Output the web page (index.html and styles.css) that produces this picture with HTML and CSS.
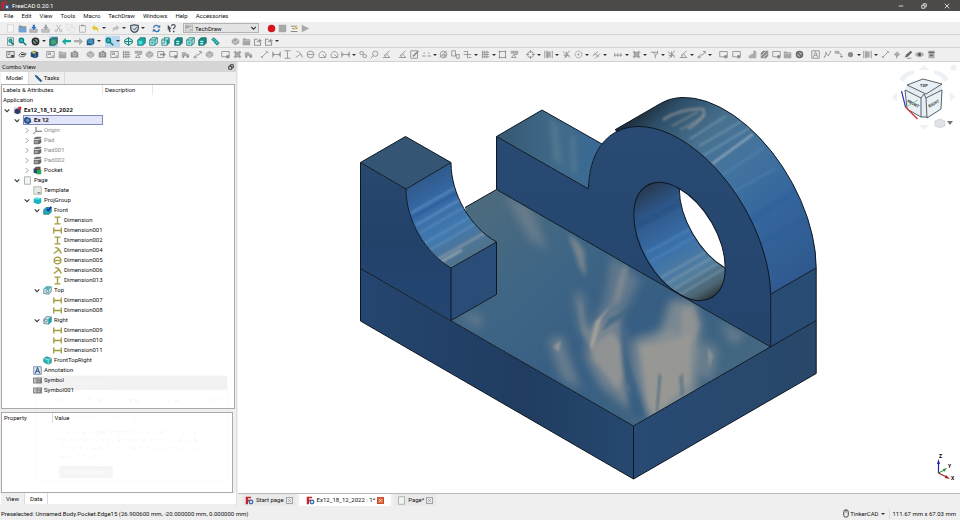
FILE: index.html
```html
<!DOCTYPE html>
<html lang="en">
<head>
  <meta charset="UTF-8">
  <meta name="viewport" content="width=device-width, initial-scale=1.0">
  <title>FreeCAD 0.20.1</title>
  <link rel="stylesheet" href="styles.css">
</head>
<body>
  <!-- icon sprite -->
  <svg class="sprite" aria-hidden="true">
    <symbol id="logo" viewBox="0 0 12 12"><path d="M1 1h7v2H4v2h3v2H4v4H1z" fill="#c5252b"/><circle cx="8" cy="8" r="2.4" fill="#cfe0f5" stroke="#3467a8" stroke-width="1.6"/></symbol>
    <symbol id="new" viewBox="0 0 12 12"><path d="M2 1h8v10H2z" fill="#f6f6f6" stroke="#d0d0d0"/></symbol>
    <symbol id="sheet" viewBox="0 0 12 12"><path d="M2 1h8v10H2z" fill="#f1f4f1" stroke="#9aa09a"/></symbol>
    <symbol id="open" viewBox="0 0 12 12"><path d="M1 2h4l1 1h5v8H1z" fill="#8b9299"/><path d="M1 5h10v6H1z" fill="#6fa3d8"/></symbol>
    <symbol id="save" viewBox="0 0 12 12"><path d="M1 7h10v4H1z" fill="#b9bdc0" stroke="#999"/><path d="M5 1h3v3h2L6.500 8 3 4h2z" fill="#3476bd"/></symbol>
    <symbol id="print" viewBox="0 0 12 12"><path d="M1 7h10v4H1z" fill="#c5c5c5" stroke="#aaa"/><path d="M5 1h3v3h2L6.500 8 3 4h2z" fill="#a2a2a2"/></symbol>
    <symbol id="cut" viewBox="0 0 12 12"><path d="M3 1l5 7M9 1L4 8" stroke="#aaa" fill="none"/><circle cx="3" cy="9" r="1.500" stroke="#aaa" fill="none"/><circle cx="9" cy="9" r="1.500" stroke="#aaa" fill="none"/></symbol>
    <symbol id="copy" viewBox="0 0 12 12"><path d="M1 1h7v7H1zM4 4h7v7H4z" fill="#f4f4f4" stroke="#dcdcdc"/></symbol>
    <symbol id="paste" viewBox="0 0 12 12"><path d="M2 2h8v9H2z" fill="#eee" stroke="#aaa"/><path d="M4 1h4v2H4z" fill="#999"/></symbol>
    <symbol id="undo" viewBox="0 0 12 12"><path d="M1 5l4-4v2.500c5 0 6 4 3 7.500 1-3 0-4-3-4V9z" fill="#e9c52c"/></symbol>
    <symbol id="redo" viewBox="0 0 12 12"><path d="M11 5L7 1v2.500c-5 0-6 4-3 7.500-1-3 0-4 3-4V9z" fill="#bdbdbd"/></symbol>
    <symbol id="bounds" viewBox="0 0 12 12"><path d="M1 2l5-1 5 1v4c0 3-3 5-5 5S1 9 1 6z" fill="#d5dde2" stroke="#35424a" stroke-width="1.500"/><path d="M4 6l2 2 3-4" stroke="#35424a" fill="none"/></symbol>
    <symbol id="refresh" viewBox="0 0 12 12"><path d="M2 5c1-4 6-4 7-1M10 7c-1 4-6 4-7 1" stroke="#3c76b5" stroke-width="1.800" fill="none"/><path d="M11 1v4H7zM1 11V7h4z" fill="#3c76b5"/></symbol>
    <symbol id="help" viewBox="0 0 12 12"><path d="M1 1l5 5-2 .5L5 10l-2 1-1-4-1 1z" fill="#46535c"/><path d="M6 3c0-3 5-3 5 0 0 2-2.500 2-2.500 4" stroke="#46535c" stroke-width="1.500" fill="none"/><path d="M8 9h2v2H8z" fill="#46535c"/></symbol>
    <symbol id="wb" viewBox="0 0 12 12"><path d="M0 1h12v10H0z" fill="#a4a8a8"/><path d="M1 2h10v8H1z" fill="#e0e2e0"/><path d="M2 3h3v3H2zM6 4h4M7 8h3" stroke="#777" fill="none"/></symbol>
    <symbol id="rec" viewBox="0 0 12 12"><circle cx="6" cy="6" r="5" fill="#d6141b"/></symbol>
    <symbol id="stop" viewBox="0 0 12 12"><path d="M1 1h10v10H1z" fill="#a8a8a8"/></symbol>
    <symbol id="edit" viewBox="0 0 12 12"><path d="M1 3h8M3 6h7M1 10h9" stroke="#8b8b80" stroke-width="1.500"/><path d="M4 7l5-5 2 1-5 5z" fill="#e4ca6a"/></symbol>
    <symbol id="play" viewBox="0 0 12 12"><path d="M1 1l10 5-10 5z" fill="#a8a8a8"/></symbol>
    <symbol id="fit" viewBox="0 0 12 12"><path d="M2 1h8v10H2z" fill="#d7eeee" stroke="#5e8888"/><circle cx="6" cy="5" r="2.200" fill="#2bb" stroke="#166"/><path d="M7 7l3 3" stroke="#166" stroke-width="2"/></symbol>
    <symbol id="lens" viewBox="0 0 12 12"><circle cx="4.500" cy="4.500" r="3" fill="#22bcc0" stroke="#14777a" stroke-width="1.500"/><path d="M7 7l4 4" stroke="#14777a" stroke-width="2"/></symbol>
    <symbol id="style" viewBox="0 0 12 12"><circle cx="6" cy="6" r="4.200" fill="#4fa7a3" stroke="#3a2526" stroke-width="2"/><path d="M3 3l6 6" stroke="#3a2526" stroke-width="1.500"/></symbol>
    <symbol id="bbox" viewBox="0 0 12 12"><path d="M1 3l3-2h7v7l-3 3H1z" fill="#318787" stroke="#174e4e"/><circle cx="6" cy="7" r="3" fill="#46a865"/></symbol>
    <symbol id="left" viewBox="0 0 12 12"><path d="M0 6l5-5v3h7v3H5v4z" fill="#18a9a3"/></symbol>
    <symbol id="right" viewBox="0 0 12 12"><path d="M12 6L7 1v3H0v3h7v4z" fill="#a9adad"/></symbol>
    <symbol id="link" viewBox="0 0 12 12"><path d="M1 4l3-2h7v7l-3 2H1z" fill="#285f91"/><path d="M1 4h7v7" fill="none" stroke="#8fc1db"/><path d="M3 7h4" stroke="#4bd" stroke-width="2"/></symbol>
    <symbol id="iso" viewBox="0 0 12 12"><path d="M6 1l5 3v4l-5 3-5-3V4zM1 6h10M6 1v10" fill="#cbeeed" stroke="#178080" stroke-width="1.300"/></symbol>
    <symbol id="cube-a" viewBox="0 0 12 12"><path d="M1 4l3-3h7v7l-3 3H1z" fill="#18a5a5" stroke="#176a6a"/><path d="M2 5h5v5H2z" fill="#46e0dd"/></symbol>
    <symbol id="cube-b" viewBox="0 0 12 12"><path d="M1 4l3-3h7v7l-3 3H1zM1 4h7v7M8 4l3-3" fill="#c3eeeb" stroke="#187d7b" stroke-width="1.200"/><path d="M3 6h3v3H3z" fill="#20b5b0"/></symbol>
    <symbol id="cube-c" viewBox="0 0 12 12"><path d="M1 4l3-3h7v7l-3 3H1z" fill="#d4efed" stroke="#187d7b"/><path d="M8 4l3-3v7l-3 3z" fill="#15a19d"/><path d="M1 4h7v7M5 1v7H1" fill="none" stroke="#187d7b"/></symbol>
    <symbol id="cube-d" viewBox="0 0 12 12"><path d="M1 4l3-3h7v7l-3 3H1z" fill="#148b88" stroke="#12605e"/><path d="M3 5h4v2H3zM3 8h4v2H3z" fill="#b5f3ef"/></symbol>
    <symbol id="measure" viewBox="0 0 12 12"><path d="M1 3l3-2 7 7-3 3z" fill="#18aaa7" stroke="#157773"/><path d="M4 3l-1 1M6 5L5 6M8 7L7 8" stroke="#fff"/></symbol>
    <symbol id="part" viewBox="0 0 12 12"><path d="M6 1l5 3v4l-5 3-5-3V4z" fill="#a9a9a9"/><path d="M3 6l3 2 4-4" stroke="#e8e8e8" fill="none"/></symbol>
    <symbol id="folder" viewBox="0 0 12 12"><path d="M1 2h4l1 1h5v8H1z" fill="#a5a5a5"/><path d="M2 5h8" stroke="#d0d0d0"/></symbol>
    <symbol id="share" viewBox="0 0 12 12"><path d="M6 3H2v8h8V7" fill="none" stroke="#999" stroke-width="1.500"/><path d="M5 8c0-3 1-4 3-4V2l4 3-4 3V6c-2 0-2 1-3 2z" fill="#999"/></symbol>
    <symbol id="page" viewBox="0 0 12 12"><path d="M1 2h10v8H1z" fill="#e8e8e3" stroke="#555"/><path d="M3 4h3M3 6h2M7 7h3v2H7z" stroke="#555"/></symbol>
    <symbol id="redraw" viewBox="0 0 12 12"><path d="M1 7l4-4 6 2-3 4H3z" fill="#ddd" stroke="#555"/><path d="M4 6h5" stroke="#333" stroke-width="1.500"/></symbol>
    <symbol id="view" viewBox="0 0 12 12"><path d="M1 3l4-2 6 2v6l-4 2-6-2z" fill="#24496f"/><path d="M2 4l5 1v5" fill="none" stroke="#5c9de0"/><path d="M4 1l4 2-2 2-4-2z" fill="#e1bf41"/></symbol>
    <!-- greyed out TechDraw tools -->
    <symbol id="g-page" viewBox="0 0 12 12"><path d="M1 2h10v8H1z" class="g"/><path d="M3 4h3v2H3zM7 8h3" class="g"/></symbol>
    <symbol id="g-cube" viewBox="0 0 12 12"><path d="M6 1l5 3v4l-5 3-5-3V4z" class="gf"/><path d="M3 5l3 2 3-2M6 7v3" class="gl"/></symbol>
    <symbol id="g-cam" viewBox="0 0 12 12"><path d="M1 3h3l1-2h3l1 2h2v7H1z" class="gd"/><circle cx="6" cy="6" r="2" class="gl"/></symbol>
    <symbol id="g-hatch" viewBox="0 0 12 12"><path d="M2 1v10M5 1v10M8 1v10M1 3h10M1 6h10M1 9h10" class="g"/></symbol>
    <symbol id="g-clip" viewBox="0 0 12 12"><path d="M3 3h6v6H3z" class="gf"/><path d="M1 3h10M3 1v10M1 9h10M9 1v10" class="g"/></symbol>
    <symbol id="g-arrow" viewBox="0 0 12 12"><path d="M1 2h8v8H1z" class="g"/><path d="M4 5h4V3l4 3-4 3V7H4z" class="gd"/></symbol>
    <symbol id="g-truck" viewBox="0 0 12 12"><path d="M1 3h6v5H1zM7 5h3l1 2v2H7z" class="gf"/><circle cx="3" cy="9" r="1.500" class="gd"/><circle cx="9" cy="9" r="1.500" class="gd"/></symbol>
    <symbol id="g-export" viewBox="0 0 12 12"><path d="M1 10l4-4 2 1 4-5M8 2h3v3" class="g"/><path d="M1 8h4v3H1z" class="gf"/></symbol>
    <symbol id="g-len" viewBox="0 0 12 12"><path d="M2 10l8-8M1 8l3 3M8 1l3 3" class="g"/></symbol>
    <symbol id="g-hor" viewBox="0 0 12 12"><path d="M1 2v8M11 2v8M1 6h10M3 4L1 6l2 2M9 4l2 2-2 2" class="g"/></symbol>
    <symbol id="g-ver" viewBox="0 0 12 12"><path d="M2 1h8M2 11h8M6 1v10" class="g"/></symbol>
    <symbol id="g-ang" viewBox="0 0 12 12"><path d="M2 2c4 0 6 3 8 8M1 10l7-5" class="g"/></symbol>
    <symbol id="g-dia" viewBox="0 0 12 12"><circle cx="6" cy="6" r="4.500" class="g"/><path d="M2 6h8" class="g"/></symbol>
    <symbol id="g-rad" viewBox="0 0 12 12"><path d="M2 10c-2-4 1-8 4-8s6 4 4 8zM6 6l4 4" class="g"/></symbol>
    <symbol id="g-chain" viewBox="0 0 12 12"><rect x="1" y="2" width="5" height="4" rx="2" class="g"/><rect x="5" y="6" width="5" height="4" rx="2" class="g"/></symbol>
    <symbol id="g-bal" viewBox="0 0 12 12"><circle cx="7" cy="5" r="3.500" class="g"/><path d="M1 11l4-4" class="g"/></symbol>
    <symbol id="g-axo" viewBox="0 0 12 12"><path d="M1 10h10M3 8l7-7M6 5l4 5M4 6v4" class="g"/></symbol>
    <symbol id="g-note" viewBox="0 0 12 12"><path d="M1 1h9v10H1z" class="g"/><path d="M3 8l7-7 2 1-7 7z" class="gd"/></symbol>
    <symbol id="g-dots" viewBox="0 0 12 12"><path d="M0 8h5M7 8h5M2 4h2M8 4h2" class="g"/></symbol>
    <symbol id="g-face" viewBox="0 0 12 12"><circle cx="6" cy="6" r="4.500" class="g"/><path d="M1 10L10 1M4 6l4 4" class="g"/><path d="M6 5h4v4H6z" class="gf"/></symbol>
    <symbol id="g-sq" viewBox="0 0 12 12"><path d="M1 1h5v7H1zM7 6h4v5H7z" class="g"/></symbol>
    <symbol id="g-mid" viewBox="0 0 12 12"><path d="M6 1v10M1 6h10M1 2h4M7 10h4" class="g"/></symbol>
    <symbol id="g-box" viewBox="0 0 12 12"><path d="M2 2h8v8H2z" class="g"/><path d="M1 1h2v2H1zM9 1h2v2H9zM1 9h2v2H1zM9 9h2v2H9z" class="gd"/></symbol>
    <symbol id="g-weld" viewBox="0 0 12 12"><path d="M1 1h10v4H1z" class="gf"/><path d="M2 10l3-4 3 4zM6 6h4" class="g"/></symbol>
    <symbol id="g-target" viewBox="0 0 12 12"><circle cx="6" cy="6" r="4" class="g"/><path d="M6 0v4M6 8v4M0 6h4M8 6h4" class="g"/></symbol>
    <symbol id="g-bars" viewBox="0 0 12 12"><path d="M3 2h6v8H3z" class="gf"/><path d="M1 1v10M11 1v10M4 1v10" class="g"/></symbol>
    <symbol id="g-star" viewBox="0 0 12 12"><path d="M1 2l10 8M10 1L3 11M6 2v8M2 7h8" class="g"/></symbol>
    <symbol id="g-circ" viewBox="0 0 12 12"><circle cx="6" cy="6" r="4.500" class="g" stroke-dasharray="3 1"/><circle cx="6" cy="6" r="1.200" class="gd"/></symbol>
    <symbol id="g-par" viewBox="0 0 12 12"><path d="M1 8l7-6M4 11l7-6M3 4l6 5" class="g"/></symbol>
    <symbol id="g-hash" viewBox="0 0 12 12"><path d="M1 4v5M5 4v5M9 4v5M0 7h11" class="g"/></symbol>
    <symbol id="g-lead" viewBox="0 0 12 12"><path d="M1 3h9M4 3l3 3v5M10 1v4L7 7" class="g"/></symbol>
    <symbol id="g-img" viewBox="0 0 12 12"><path d="M1 2h10v7H1z" class="g"/><path d="M3 4h5M7 7h4v4H7z" class="gd"/></symbol>
    <symbol id="g-steps" viewBox="0 0 12 12"><path d="M1 7h3V5h3V1h4v10H1z" class="gf"/></symbol>
    <symbol id="g-geo" viewBox="0 0 12 12"><path d="M1 4l3-3h7v7l-3 3H1z" class="gd"/><path d="M1 8l7-6M4 10l6-5" class="gl"/></symbol>
    <symbol id="g-no" viewBox="0 0 12 12"><circle cx="6" cy="6" r="4" fill="#bbb" stroke="#666" stroke-width="2"/><path d="M3 3l6 6" stroke="#666" stroke-width="2"/></symbol>
    <symbol id="g-a" viewBox="0 0 12 12"><path d="M1 1h10v10H1z" class="g"/><path d="M3 10l3-8 3 8M4 7h4" class="g"/></symbol>
    <symbol id="g-poly" viewBox="0 0 12 12"><path d="M2 10l2-6 3 4 3-6M1 9h2M3 3h2M9 2h2" class="g"/></symbol>
    <symbol id="g-flow" viewBox="0 0 12 12"><path d="M1 1h6v4H1z" class="gf"/><path d="M6 4c3 0 4 2 4 6M8 8l2 2 2-2" class="g"/></symbol>
    <symbol id="g-dot" viewBox="0 0 12 12"><circle cx="6" cy="6" r="3.500" class="gd"/></symbol>
    <symbol id="g-pen" viewBox="0 0 12 12"><path d="M1 10l2-4 6-5 2 2-6 6z" fill="#666"/><path d="M4 11h6" class="g"/></symbol>
    <symbol id="g-pin" viewBox="0 0 12 12"><path d="M2 6l5-4 4 4-4 3z" class="gf"/><path d="M6 7v4" class="g"/></symbol>
    <symbol id="g-eye" viewBox="0 0 12 12"><path d="M0 6c3-5 9-5 12 0-3 5-9 5-12 0z" class="gf"/><circle cx="6" cy="6" r="2" fill="#555"/></symbol>
    <symbol id="g-db" viewBox="0 0 12 12"><path d="M2 1h8v10H2z" class="gf"/><path d="M2 3h8M4 7h4" stroke="#555" stroke-width="1.500"/></symbol>
    <!-- tree icons -->
    <symbol id="t-doc" viewBox="0 0 12 12"><path d="M1 1h10v10H1z" fill="#dde2e8"/><path d="M2 5l4-2 4 2v4l-4 2-4-2z" fill="#303a66"/><path d="M7 1h4v4H7z" fill="#c32c3b"/></symbol>
    <symbol id="t-body" viewBox="0 0 12 12"><path d="M1 4l3-3 6 2 1 5-4 3-5-2z" fill="#254d7c"/><path d="M3 5l4-2 2 3-3 3z" fill="#5e8fc5"/></symbol>
    <symbol id="t-origin" viewBox="0 0 12 12"><path d="M4 1v6h8M4 7l-4 4" fill="none" stroke="#666" stroke-width="1.300"/></symbol>
    <symbol id="t-pad" viewBox="0 0 12 12"><path d="M1 3l3-2h7v2L8 4H1z" fill="#777"/><path d="M1 5h7l3-1v5l-3 2H1z" fill="#666"/><path d="M2 7h5M2 9h5" stroke="#ccc"/></symbol>
    <symbol id="t-pocket" viewBox="0 0 12 12"><path d="M1 4l3-3h6v9l-3 1-6-2z" fill="#2d5d43"/><path d="M5 5h6v6H5z" fill="#23a950"/><path d="M1 4h4v5H1z" fill="#2b447d"/><path d="M6 1l3 3H4z" fill="#df323b"/></symbol>
    <symbol id="t-tpl" viewBox="0 0 12 12"><path d="M1 1h10v10H1z" fill="#e8ece8" stroke="#a0a6a0"/><path d="M6 8h4v2H6z" fill="#88908a"/></symbol>
    <symbol id="t-grp" viewBox="0 0 12 12"><path d="M1 4l3-2 7 1v6l-4 2-6-2z" fill="#19b4bb"/><path d="M1 4l3-2 7 1-4 2z" fill="#66e0e2"/></symbol>
    <symbol id="t-front" viewBox="0 0 12 12"><path d="M1 5l3-3h7v6l-3 3H1z" fill="#20aabb" stroke="#176"/><path d="M5 4l2 2 4-5" stroke="#182fc0" stroke-width="2.500" fill="none"/></symbol>
    <symbol id="t-top" viewBox="0 0 12 12"><path d="M1 4l3-3h7v6l-3 4-7-1z" fill="#d2e9ea" stroke="#49777c"/><path d="M1 4l3-3h7L8 5z" fill="#44bcc1"/><circle cx="6" cy="7" r="2" fill="none" stroke="#49777c"/></symbol>
    <symbol id="t-right" viewBox="0 0 12 12"><path d="M1 4l3-3h7v6l-3 4-7-1z" fill="#d2e9ea" stroke="#49777c"/><path d="M7 4l4-3v7l-4 3z" fill="#1aa2a6"/><circle cx="4" cy="6" r="2" fill="none" stroke="#49777c"/></symbol>
    <symbol id="t-iso" viewBox="0 0 12 12"><path d="M1 3l4-2 6 2v6l-4 2-6-3z" fill="#1fb9bb" stroke="#3d7f80"/><path d="M1 3l6 2v6M7 5l4-2" fill="none" stroke="#bdeeee"/></symbol>
    <symbol id="t-ver" viewBox="0 0 12 12"><path d="M2 1.500h8M2 10.500h8M6 1v10" class="d"/></symbol>
    <symbol id="t-hor" viewBox="0 0 12 12"><path d="M1 2v8M11 2v8M1 6h10" class="d"/></symbol>
    <symbol id="t-ang" viewBox="0 0 12 12"><path d="M3 2c4 0 6 3 8 8M1 10l7-5" class="d"/></symbol>
    <symbol id="t-dia" viewBox="0 0 12 12"><circle cx="6" cy="6" r="4.500" class="d"/><path d="M2 6h8" class="d"/></symbol>
    <symbol id="t-ann" viewBox="0 0 12 12"><path d="M1 1h10v10H1z" fill="#e5edf5" stroke="#4f6f99"/><path d="M3 10l3-8 3 8M4 7h4" stroke="#27446e" stroke-width="1.300" fill="none"/></symbol>
    <symbol id="t-sym" viewBox="0 0 12 12"><path d="M0 2h12v8H0z" fill="#888"/><path d="M2 4h2v4H2zM6 4h4M6 7h3" stroke="#ddd" fill="none"/></symbol>
    <symbol id="t-task" viewBox="0 0 12 12"><path d="M1 1l3 1 7 7-2 2-7-7z" fill="#2c5b85"/></symbol>
    <symbol id="down" viewBox="0 0 12 12"><path d="M2 4l4 4 4-4" fill="none" stroke="#333" stroke-width="1.800"/></symbol>
    <symbol id="next" viewBox="0 0 12 12"><path d="M4 2l4 4-4 4" fill="none" stroke="#777" stroke-width="1.300"/></symbol>
    <symbol id="close" viewBox="0 0 12 12"><path d="M3 3l6 6M9 3L3 9" fill="none" stroke="currentColor" stroke-width="1.800"/></symbol>
  </svg>

  <header class="titlebar">
    <svg class="icon"><use href="#logo"/></svg>
    <h1>FreeCAD 0.20.1</h1>
    <div class="window-buttons">
      <button aria-label="Minimize"><svg viewBox="0 0 8 8"><path d="M1 4h6"/></svg></button>
      <button aria-label="Restore"><svg viewBox="0 0 8 8"><path d="M1 3h4v4H1zM3 3V1h4v4H5"/></svg></button>
      <button aria-label="Close window"><svg viewBox="0 0 8 8"><path d="M1 1l6 6M7 1L1 7"/></svg></button>
    </div>
  </header>

  <nav class="menubar">
    <a href="#">File</a><a href="#">Edit</a><a href="#">View</a><a href="#">Tools</a><a href="#">Macro</a><a href="#">TechDraw</a><a href="#">Windows</a><a href="#">Help</a><a href="#">Accessories</a>
  </nav>

  <div class="toolbar toolbar-file">
    <div class="group">
      <button aria-label="New"><svg><use href="#new"/></svg></button>
      <button aria-label="Open"><svg><use href="#open"/></svg></button>
      <button aria-label="Save"><svg><use href="#save"/></svg></button>
      <button aria-label="Print"><svg><use href="#print"/></svg></button>
    </div>
    <div class="group plain">
      <button aria-label="Cut"><svg><use href="#cut"/></svg></button>
      <button aria-label="Copy"><svg><use href="#copy"/></svg></button>
      <button aria-label="Paste"><svg><use href="#paste"/></svg></button>
    </div>
    <div class="group plain">
      <button class="drop" aria-label="Undo"><svg><use href="#undo"/></svg></button>
      <button class="drop" aria-label="Redo"><svg><use href="#redo"/></svg></button>
    </div>
    <div class="group plain">
      <button class="drop" aria-label="Link navigation"><svg><use href="#bounds"/></svg></button>
      <button aria-label="Refresh"><svg><use href="#refresh"/></svg></button>
      <button aria-label="What's this"><svg><use href="#help"/></svg></button>
    </div>
    <div class="group workbench">
      <svg class="icon"><use href="#wb"/></svg>
      <select aria-label="Workbench"><option>TechDraw</option></select>
      <svg class="icon chevron"><use href="#down"/></svg>
    </div>
    <div class="group">
      <button aria-label="Record macro"><svg><use href="#rec"/></svg></button>
      <button aria-label="Stop macro"><svg><use href="#stop"/></svg></button>
      <button aria-label="Edit macros"><svg><use href="#edit"/></svg></button>
      <button aria-label="Run macro"><svg><use href="#play"/></svg></button>
    </div>
  </div>

  <div class="toolbar toolbar-view">
    <div class="group">
      <button aria-label="Fit all"><svg><use href="#fit"/></svg></button>
      <button aria-label="Fit selection"><svg><use href="#lens"/></svg></button>
      <button class="drop" aria-label="Draw style"><svg><use href="#style"/></svg></button>
      <button class="on" aria-label="Bounding box"><svg><use href="#bbox"/></svg></button>
    </div>
    <div class="group plain">
      <button aria-label="Back"><svg><use href="#left"/></svg></button>
      <button aria-label="Forward"><svg><use href="#right"/></svg></button>
      <button class="drop" aria-label="Go to link"><svg><use href="#link"/></svg></button>
    </div>
    <div class="group plain">
      <button class="drop on" aria-label="Zoom"><svg><use href="#lens"/></svg></button>
      <button aria-label="Isometric"><svg><use href="#iso"/></svg></button>
    </div>
    <div class="group plain">
      <button aria-label="Front view"><svg><use href="#cube-a"/></svg></button>
      <button aria-label="Top view"><svg><use href="#cube-b"/></svg></button>
      <button aria-label="Right view"><svg><use href="#cube-c"/></svg></button>
    </div>
    <div class="group plain">
      <button aria-label="Rear view"><svg><use href="#cube-d"/></svg></button>
      <button aria-label="Bottom view"><svg><use href="#cube-b"/></svg></button>
      <button aria-label="Left view"><svg><use href="#cube-d"/></svg></button>
    </div>
    <div class="group plain">
      <button aria-label="Measure"><svg><use href="#measure"/></svg></button>
    </div>
    <div class="group">
      <button aria-label="Create part"><svg><use href="#part"/></svg></button>
      <button aria-label="Create group"><svg><use href="#folder"/></svg></button>
      <button aria-label="Make link"><svg><use href="#share"/></svg></button>
      <button class="drop" aria-label="Make sub-link"><svg><use href="#share"/></svg></button>
    </div>
  </div>

  <div class="toolbar toolbar-draw">
    <div class="group">
      <button aria-label="Insert page"><svg><use href="#page"/></svg></button>
      <button aria-label="Redraw page"><svg><use href="#redraw"/></svg></button>
      <button aria-label="Insert view"><svg><use href="#view"/></svg></button>
    </div>
    <div class="group">
      <button aria-label="Template page"><svg><use href="#g-page"/></svg></button>
      <button aria-label="Open page"><svg><use href="#folder"/></svg></button>
      <button aria-label="Print pages"><svg><use href="#g-cam"/></svg></button>
    </div>
    <div class="group">
      <button aria-label="Projection group"><svg><use href="#g-cube"/></svg></button>
      <button aria-label="Active view"><svg><use href="#g-cam"/></svg></button>
      <button aria-label="Section view"><svg><use href="#g-page"/></svg></button>
      <button aria-label="Detail view"><svg><use href="#g-hatch"/></svg></button>
      <button aria-label="Draft view"><svg><use href="#g-weld"/></svg></button>
      <button aria-label="Arch view"><svg><use href="#g-cube"/></svg></button>
      <button aria-label="Move view"><svg><use href="#g-arrow"/></svg></button>
      <button aria-label="Spreadsheet view"><svg><use href="#g-img"/></svg></button>
      <button aria-label="Share view"><svg><use href="#g-truck"/></svg></button>
      <button aria-label="Export"><svg><use href="#g-export"/></svg></button>
      <button aria-label="Project shape"><svg><use href="#g-cube"/></svg></button>
    </div>
    <div class="group">
      <button aria-label="Clip group"><svg><use href="#g-img"/></svg></button>
      <button aria-label="Add to clip"><svg><use href="#g-clip"/></svg></button>
      <button aria-label="Remove from clip"><svg><use href="#g-truck"/></svg></button>
    </div>
    <div class="group">
      <button aria-label="Length"><svg><use href="#g-len"/></svg></button>
      <button aria-label="Horizontal"><svg><use href="#g-hor"/></svg></button>
      <button aria-label="Vertical"><svg><use href="#g-ver"/></svg></button>
      <button aria-label="Angle"><svg><use href="#g-ang"/></svg></button>
      <button aria-label="Diameter"><svg><use href="#g-dia"/></svg></button>
      <button aria-label="Radius"><svg><use href="#g-rad"/></svg></button>
      <button aria-label="3 point angle"><svg><use href="#g-rad"/></svg></button>
      <button class="drop" aria-label="Extent"><svg><use href="#g-hor"/></svg></button>
      <button aria-label="Link dimension"><svg><use href="#g-chain"/></svg></button>
      <button aria-label="Balloon"><svg><use href="#g-bal"/></svg></button>
      <button aria-label="Axonometric"><svg><use href="#g-axo"/></svg></button>
    </div>
    <div class="group">
      <button aria-label="Landmark"><svg><use href="#g-axo"/></svg></button>
      <button aria-label="Rich text"><svg><use href="#g-note"/></svg></button>
      <button class="drop" aria-label="Cosmetic vertex"><svg><use href="#g-dots"/></svg></button>
      <button aria-label="Hatch face"><svg><use href="#g-face"/></svg></button>
      <button aria-label="Cosmetic eraser"><svg><use href="#g-sq"/></svg></button>
      <button class="drop" aria-label="Centerline"><svg><use href="#g-mid"/></svg></button>
      <button class="drop" aria-label="Line group"><svg><use href="#g-hatch"/></svg></button>
      <button aria-label="Show all"><svg><use href="#g-box"/></svg></button>
      <button aria-label="Weld"><svg><use href="#g-weld"/></svg></button>
    </div>
    <div class="group">
      <button class="drop" aria-label="Circle centerlines"><svg><use href="#g-target"/></svg></button>
      <button class="drop" aria-label="Thread"><svg><use href="#g-bars"/></svg></button>
      <button aria-label="Intersections"><svg><use href="#g-star"/></svg></button>
      <button class="drop" aria-label="Cosmetic circle"><svg><use href="#g-circ"/></svg></button>
      <button class="drop" aria-label="Parallel line"><svg><use href="#g-par"/></svg></button>
    </div>
    <div class="group">
      <button class="drop" aria-label="Chain dimension"><svg><use href="#g-hash"/></svg></button>
      <button class="drop" aria-label="Coordinate dimension"><svg><use href="#g-clip"/></svg></button>
      <button class="drop" aria-label="Chamfer dimension"><svg><use href="#g-lead"/></svg></button>
      <button aria-label="Arc length"><svg><use href="#g-star"/></svg></button>
      <button class="drop" aria-label="Dimension prefix"><svg><use href="#g-axo"/></svg></button>
      <button class="drop" aria-label="Increase decimals"><svg><use href="#g-export"/></svg></button>
    </div>
    <div class="group">
      <button aria-label="Lock view"><svg><use href="#g-img"/></svg></button>
      <button aria-label="Section position"><svg><use href="#g-img"/></svg></button>
    </div>
    <div class="group">
      <button aria-label="Hatch"><svg><use href="#g-steps"/></svg></button>
      <button aria-label="Geometric hatch"><svg><use href="#g-geo"/></svg></button>
      <button aria-label="Symbol"><svg><use href="#g-img"/></svg></button>
      <button aria-label="Image"><svg><use href="#folder"/></svg></button>
      <button aria-label="Toggle frame"><svg><use href="#g-no"/></svg></button>
    </div>
    <div class="group">
      <button aria-label="Annotation"><svg><use href="#g-a"/></svg></button>
      <button aria-label="Leader line"><svg><use href="#g-poly"/></svg></button>
      <button aria-label="Rich annotation"><svg><use href="#g-flow"/></svg></button>
      <button class="drop" aria-label="Vertex"><svg><use href="#g-dot"/></svg></button>
      <button class="drop" aria-label="Center lines"><svg><use href="#g-bars"/></svg></button>
      <button aria-label="Cosmetic line"><svg><use href="#g-len"/></svg></button>
      <button aria-label="Erase"><svg><use href="#g-pin"/></svg></button>
      <button aria-label="Decorate line"><svg><use href="#g-pen"/></svg></button>
      <button aria-label="Show edges"><svg><use href="#g-eye"/></svg></button>
      <button aria-label="Surface finish"><svg><use href="#g-db"/></svg></button>
    </div>
  </div>

  <main>
    <aside class="dock">
      <div class="dock-title">
        <h2>Combo View</h2>
        <button aria-label="Float panel"><svg viewBox="0 0 8 8"><path d="M1 3h4v4H1zM3 3V1h4v4H5"/></svg></button>
      </div>
      <div class="tabs tabs-top">
        <button class="active">Model</button>
        <button><svg class="icon"><use href="#t-task"/></svg>Tasks</button>
      </div>

      <section class="tree">
        <div class="tree-head"><span>Labels &amp; Attributes</span><span>Description</span></div>
        <div class="row root">Application</div>
        <ul>
          <li>
            <div class="row bold"><svg><use href="#down"/></svg><svg><use href="#t-doc"/></svg><span>Ex12_18_12_2022</span></div>
            <ul>
              <li>
                <div class="row bold selected"><svg><use href="#down"/></svg><span class="pick"><svg><use href="#t-body"/></svg><span>Ex 12</span></span></div>
                <ul>
                  <li class="row dim"><svg><use href="#next"/></svg><svg><use href="#t-origin"/></svg><span>Origin</span></li>
                  <li class="row dim"><svg><use href="#next"/></svg><svg><use href="#t-pad"/></svg><span>Pad</span></li>
                  <li class="row dim"><svg><use href="#next"/></svg><svg><use href="#t-pad"/></svg><span>Pad001</span></li>
                  <li class="row dim"><svg><use href="#next"/></svg><svg><use href="#t-pad"/></svg><span>Pad002</span></li>
                  <li class="row"><svg><use href="#next"/></svg><svg><use href="#t-pocket"/></svg><span>Pocket</span></li>
                </ul>
              </li>
              <li>
                <div class="row"><svg><use href="#down"/></svg><svg><use href="#sheet"/></svg><span>Page</span></div>
                <ul>
                  <li class="row leaf"><svg><use href="#t-tpl"/></svg><span>Template</span></li>
                  <li>
                    <div class="row"><svg><use href="#down"/></svg><svg><use href="#t-grp"/></svg><span>ProjGroup</span></div>
                    <ul>
                      <li>
                        <div class="row"><svg><use href="#down"/></svg><svg><use href="#t-front"/></svg><span>Front</span></div>
                        <ul>
                          <li class="row leaf"><svg><use href="#t-ver"/></svg><span>Dimension</span></li>
                          <li class="row leaf"><svg><use href="#t-hor"/></svg><span>Dimension001</span></li>
                          <li class="row leaf"><svg><use href="#t-ver"/></svg><span>Dimension002</span></li>
                          <li class="row leaf"><svg><use href="#t-ang"/></svg><span>Dimension004</span></li>
                          <li class="row leaf"><svg><use href="#t-dia"/></svg><span>Dimension005</span></li>
                          <li class="row leaf"><svg><use href="#t-ang"/></svg><span>Dimension006</span></li>
                          <li class="row leaf"><svg><use href="#t-ver"/></svg><span>Dimension013</span></li>
                        </ul>
                      </li>
                      <li>
                        <div class="row"><svg><use href="#down"/></svg><svg><use href="#t-top"/></svg><span>Top</span></div>
                        <ul>
                          <li class="row leaf"><svg><use href="#t-hor"/></svg><span>Dimension007</span></li>
                          <li class="row leaf"><svg><use href="#t-hor"/></svg><span>Dimension008</span></li>
                        </ul>
                      </li>
                      <li>
                        <div class="row"><svg><use href="#down"/></svg><svg><use href="#t-right"/></svg><span>Right</span></div>
                        <ul>
                          <li class="row leaf"><svg><use href="#t-hor"/></svg><span>Dimension009</span></li>
                          <li class="row leaf"><svg><use href="#t-hor"/></svg><span>Dimension010</span></li>
                          <li class="row leaf"><svg><use href="#t-hor"/></svg><span>Dimension011</span></li>
                        </ul>
                      </li>
                      <li class="row leaf"><svg><use href="#t-iso"/></svg><span>FrontTopRight</span></li>
                    </ul>
                  </li>
                  <li class="row leaf"><svg><use href="#t-ann"/></svg><span>Annotation</span></li>
                  <li class="row leaf"><svg><use href="#t-sym"/></svg><span>Symbol</span></li>
                  <li class="row leaf"><svg><use href="#t-sym"/></svg><span>Symbol001</span></li>
                </ul>
              </li>
            </ul>
          </li>
        </ul>
      </section>

      <section class="props">
        <table>
          <thead><tr><th>Property</th><th>Value</th></tr></thead>
        </table>
      </section>
      <div class="tabs tabs-bottom">
        <button>View</button>
        <button class="active">Data</button>
      </div>

      <!-- window fading out over the dock -->
      <div class="ghost" aria-hidden="true">
        <div class="ghost-title">Snipping Tool</div>
        <div class="ghost-tools"><span>New</span><span>Mode</span><span>Delay</span><span>Cancel</span><span>Options</span></div>
        <div class="ghost-text">
          <h3>Snipping Tool is moving...</h3>
          <p>In a future update, Snipping Tool will be moving to a new home. Try improved features and snip like usual with Snip &amp; Sketch (or try the shortcut Windows logo key + Shift + S).</p>
          <span class="ghost-button">Try Snip &amp; Sketch</span>
        </div>
      </div>
    </aside>

    <section class="workspace">
      <div class="canvas">
        <svg class="model" viewBox="238 62 722 431" role="img" aria-label="3D model">
          <defs>
            <linearGradient id="side" x1="0" y1="0" x2="0" y2="1"><stop offset="0" stop-color="#28486e"/><stop offset=".5" stop-color="#22426a"/><stop offset="1" stop-color="#244672"/></linearGradient>
            <linearGradient id="base-l" x1="0" y1="0" x2="1" y2="0"><stop offset="0" stop-color="#254670"/><stop offset=".6" stop-color="#203c60"/><stop offset="1" stop-color="#264970"/></linearGradient>
            <linearGradient id="base-r" x1="0" y1="0" x2="1" y2="0"><stop offset="0" stop-color="#284a73"/><stop offset="1" stop-color="#284769"/></linearGradient>
            <linearGradient id="wall" x1="0" y1="0" x2="0" y2="1"><stop offset="0" stop-color="#284a73"/><stop offset="1" stop-color="#24446c"/></linearGradient>
            <linearGradient id="ledge" x1="0" y1="0" x2="1" y2="0"><stop offset="0" stop-color="#365873"/><stop offset=".6" stop-color="#416b8a"/><stop offset="1" stop-color="#386a96"/></linearGradient>
            <linearGradient id="floor" gradientUnits="userSpaceOnUse" x1="480" y1="200" x2="680" y2="430"><stop offset="0" stop-color="#4d6b7e"/><stop offset=".3" stop-color="#3f6685"/><stop offset=".65" stop-color="#375e83"/><stop offset="1" stop-color="#456982"/></linearGradient>
            <linearGradient id="notch" gradientUnits="userSpaceOnUse" x1="415" y1="175" x2="465" y2="262"><stop offset="0" stop-color="#2f5583"/><stop offset=".3" stop-color="#3568a4"/><stop offset=".65" stop-color="#4279af"/><stop offset="1" stop-color="#527288"/></linearGradient>
            <linearGradient id="rim" gradientUnits="userSpaceOnUse" x1="630" y1="105" x2="795" y2="285"><stop offset="0" stop-color="#151c25"/><stop offset=".13" stop-color="#2e4e68"/><stop offset=".3" stop-color="#47718f"/><stop offset=".48" stop-color="#43749f"/><stop offset=".7" stop-color="#35669e"/><stop offset="1" stop-color="#2e598e"/></linearGradient>
            <linearGradient id="bore" gradientUnits="userSpaceOnUse" x1="648" y1="184" x2="716" y2="298"><stop offset="0" stop-color="#27384d"/><stop offset=".2" stop-color="#2d5689"/><stop offset=".5" stop-color="#3b71ab"/><stop offset=".75" stop-color="#527e9f"/><stop offset=".9" stop-color="#4c6675"/><stop offset="1" stop-color="#282c2f"/></linearGradient>
            <filter id="soft" x="-50%" y="-50%" width="200%" height="200%"><feGaussianBlur stdDeviation="5"/></filter>
            <filter id="fine" x="-50%" y="-50%" width="200%" height="200%"><feGaussianBlur stdDeviation="1"/></filter>
            <filter id="mid" x="-50%" y="-50%" width="200%" height="200%"><feGaussianBlur stdDeviation="2"/></filter>
            <clipPath id="c-floor"><path d="M451 320.500L496.500 294.500V242L470 235L465 207.500L496.500 189.500L770.700 347L633.500 426z"/></clipPath>
            <clipPath id="c-notch"><path d="M406 189L451 162.500C451 194 470 227 496.500 242L451 268C425 253 406 220 406 189z"/></clipPath>
            <clipPath id="c-rim"><path d="M615 129.800L660.500 103.500A129 74.500 60 0 1 816.200 267.900L770.700 294.200L680 241z"/></clipPath>
            <clipPath id="c-hole"><ellipse cx="679.500" cy="241.500" rx="64.600" ry="37.300" transform="rotate(60 679.500 241.500)"/></clipPath>
            <clipPath id="c-ledge"><path d="M496.500 136.500L542 110L602 144Q588 164 588.300 188.800z"/></clipPath>
          </defs>

          <!-- floor with sky reflection -->
          <path d="M451 320.500L496.500 294.500V242L470 235L465 207.500L496.500 189.500L770.700 347L633.500 426z" fill="url(#floor)"/>
          <g clip-path="url(#c-floor)">
            <g filter="url(#soft)" fill="#8b9296">
              <path d="M505 195L530 205 548 250 530 240z" opacity=".5"/>
              <path d="M612 255L640 280 625 310 600 340 590 350 586 335 605 300z" opacity=".5"/>
              <path d="M590 330L620 315 632 370 630 410 600 385 585 357z" opacity=".7"/>
              <path d="M632 340L665 330 700 345 695 400 650 430 638 385z" opacity=".9"/>
              <path d="M670 300L694 300 702 325 694 365 655 350z" opacity=".8"/>
              <path d="M574 290L584 296 585 318 596 350 580 330z" opacity=".6"/>
              <path d="M548 340L562 335 568 355 582 390 562 380z" opacity=".6"/>
              <path d="M460 315L480 314 482 330z" opacity=".5"/>
              <path d="M704 340L718 350 712 380 700 375z" opacity=".6"/>
              <path d="M720 322L745 335 733 345z" opacity=".6"/>
            </g>
            <g filter="url(#mid)" fill="#9c9a94">
              <path d="M568 234L576 240 584 250 586 277 580 268z" opacity=".6"/>
              <path d="M624 262L628 270 620 300 612 306z" opacity=".5"/>
              <path d="M594 345L612 332 622 345 624 375 618 390 602 370 592 358z" opacity=".7"/>
              <path d="M640 346L668 342 690 335 690 382 655 415 648 405z" opacity=".8"/>
              <path d="M682 308L694 306 699 325 694 345 680 340z" opacity=".6"/>
              <path d="M578 298L582 306 584 322 592 350 582 330z" opacity=".5"/>
            </g>
            <g filter="url(#fine)">
              <path d="M612 304L602 318 594 345 592 352 590 345 595 322z" fill="#aaa69b" opacity=".8"/>
              <path d="M629 310L618 320 602 331 609 318z" fill="#426782" opacity=".8"/>
              <path d="M553 347L561 340 559 352z" fill="#aaa69b" opacity=".6"/>
              <path d="M659 373L661 376 658 410 656 412z" fill="#526f80"/>
              <path d="M679 377L683 373 684 393 681 398z" fill="#526f80" opacity=".7"/>
              <path d="M626 386L632 382 631 396z" fill="#a4a096" opacity=".7"/>
              <path d="M708 347L713 356 709 368z" fill="#a4a096" opacity=".6"/>
            </g>
            <path d="M626 312C622 335 630 370 648 422L632 412C622 375 618 335 626 312z" fill="#345d83" opacity=".8" filter="url(#mid)"/>
          </g>

          <!-- ledge behind the ring -->
          <path d="M496.500 136.500L542 110L602 144Q588 164 588.300 188.800z" fill="url(#ledge)"/>
          <g clip-path="url(#c-ledge)"><path d="M549 118L558 124 562 165 553 160zM570 135L576 137 577 175 571 172z" fill="#68869a" opacity=".4" filter="url(#mid)"/></g>

          <!-- ring -->
          <path d="M615 129.800L660.500 103.500A129 74.500 60 0 1 816.200 267.900L770.700 294.200L680 241z" fill="url(#rim)"/>
          <g clip-path="url(#c-rim)">
            <g filter="url(#fine)" fill="none" stroke="#a9a6a0">
              <path d="M663 120Q680 108 703 109Q708 116 688 129" stroke-width="3" opacity=".5"/>
              <path d="M672 126L698 112M680 130L706 115" stroke-width="2" opacity=".4"/>
              <path d="M690 139L726 116M699 146L742 121M704 155L751 127" stroke="#92afc1" stroke-width="2" opacity=".5"/>
              <path d="M712 164L753 134" stroke="#a9bcc8" stroke-width="2" opacity=".8"/>
              <path d="M722 175L764 148M733 192L776 168" stroke="#5f91bf" stroke-width="2" opacity=".4"/>
              <path d="M748 222L795 192M758 246L806 218" stroke="#2c5c94" stroke-width="5" opacity=".35"/>
            </g>
          </g>
          <path d="M496.500 136.500L588.300 188.800A129 74.500 60 0 1 770.700 294.200V347L496.500 189.500z" fill="url(#wall)"/>
          <path d="M770.700 294.200L816.200 267.900V320.500L770.700 347z" fill="#284c73"/>
          <g clip-path="url(#c-hole)">
            <path d="M630 180h100v125H630z" fill="url(#bore)"/>
            <g filter="url(#fine)" fill="none" stroke="#a5b4bb" stroke-width="2">
              <path d="M660 278L720 244M666 284L725 250M672 290L727 258M679 295L727 267" opacity=".45"/>
              <path d="M636 227L680 203" stroke="#25507f" stroke-width="5" opacity=".6"/>
              <path d="M646 253L700 224M650 262L706 230" stroke="#639bd0" opacity=".4"/>
            </g>
            <ellipse cx="725" cy="215.200" rx="64.600" ry="37.300" transform="rotate(60 725 215.200)" fill="#fff" class="edge"/>
          </g>

          <!-- notched block -->
          <path d="M360.500 162.500L405.500 136.500L451 162.500L406 189z" fill="#345674"/>
          <path d="M406 189L451 162.500C451 194 470 227 496.500 242L451 268C425 253 406 220 406 189z" fill="url(#notch)"/>
          <g clip-path="url(#c-notch)"><g filter="url(#fine)" fill="none" stroke="#83b3da" stroke-width="2">
            <path d="M411 213L455 188M416 225L461 199" opacity=".5"/>
            <path d="M420 233L466 206M425 243L473 215M430 250L480 221" opacity=".35"/>
            <path d="M411 218L457 193" stroke="#235692" opacity=".6"/>
            <path d="M436 260L490 230" stroke="#a5aaa8" stroke-width="3" opacity=".5"/>
            <path d="M441 262L462 250" stroke="#d1cfc3" opacity=".7"/>
          </g></g>
          <path d="M360.500 162.500L406 189C406 220 425 253 451 268V320.500L360.500 268.500z" fill="url(#side)"/>
          <path d="M451 268L496.500 242V294.500L451 320.500z" fill="#294d76"/>

          <!-- base -->
          <path d="M360.500 268.500L633.500 426V479L360.500 321z" fill="url(#base-l)"/>
          <path d="M633.500 426L816.200 320.500V373.500L633.500 479z" fill="url(#base-r)"/>

          <g class="edge">
            <path d="M360.500 162.500L405.500 136.500L451 162.500L406 189zV321L633.500 479L816.200 373.500V267.900"/>
            <path d="M360.500 268.500L633.500 426L816.200 320.500M633.500 426V479"/>
            <path d="M406 189C406 220 425 253 451 268L496.500 242C470 227 451 194 451 162.500M451 268V320.500L496.500 294.500V242M465 207.500L496.500 189.500"/>
            <path d="M588.300 188.800L496.500 136.500L542 110L602 144M496.500 136.500V189.500L770.700 347V294.200L816.200 267.900"/>
            <path d="M588.300 188.800A129 74.500 60 0 1 770.700 294.200M615 129.800L660.500 103.500A129 74.500 60 0 1 816.200 267.900"/>
            <ellipse cx="679.500" cy="241.500" rx="64.600" ry="37.300" transform="rotate(60 679.500 241.500)"/>
          </g>
        </svg>

        <svg class="navcube" viewBox="890 62 70 70" role="img" aria-label="Navigation cube">
          <g fill="#edf1f5">
            <path d="M899 79q6-8 15-9v4q-6 1-11 8zM949 79q-6-8-15-9v4q6 1 11 8zM919 70l5-5 5 5zM919 125l5 5 5-5zM897 92l-5 5 5 5zM950 92l5 5-5 5z"/>
            <circle cx="953.500" cy="67.500" r="3"/>
          </g>
          <path d="M905 90L907 85 923 79 942 84 942 90 941 109 927 118 921 117 907 109z" fill="#e4edf3"/>
          <g fill="#e9f1f6" stroke="#333d43" stroke-width=".8">
            <path d="M907 85L923 79 942 84 926 94z"/>
            <path d="M905 90L921 98 921 117 907 109z"/>
            <path d="M926 98L942 90 941 109 927 118z"/>
          </g>
          <path d="M921 98l3-4 2 4M921 117h6" fill="none" stroke="#333d43" stroke-width=".8"/>
          <g class="cube-text">
            <text x="924" y="87">TOP</text>
            <text x="913" y="105" transform="rotate(28 913 104)">FRONT</text>
            <text x="934" y="105" transform="rotate(-28 934 104)">RIGHT</text>
          </g>
          <path d="M901.500 91l4 16" stroke="#2932bd" stroke-width="1.200"/>
          <path d="M905.500 107l12 12" stroke="#cf3036" stroke-width="1.200"/>
          <path d="M906 107l12-7" stroke="#6fc278" stroke-width=".8"/>
          <path d="M935 121l5-2 5 2v5l-5 2-5-2z" fill="#e0e3e5" stroke="#c7cacc" stroke-width=".6"/>
          <path d="M947 121h6l-3 4z" fill="#777"/>
        </svg>

        <svg class="axes" viewBox="930 450 26 32" role="img" aria-label="Axis cross">
          <path d="M938.500 472v-10" stroke="#23269c" stroke-width="1.200"/><path d="M937 463l1.500-5 1.500 5z" fill="#23269c"/>
          <path d="M938.500 472l6-3" stroke="#27903b"/><path d="M943 468l4-1-3 4z" fill="#27903b"/>
          <path d="M938.500 472l8 4" stroke="#a02226" stroke-width="1.200"/><path d="M946 474l4 4-5-1z" fill="#a02226"/>
          <text x="939" y="457">Z</text><text x="948" y="467">Y</text><text x="951" y="479">X</text>
        </svg>
      </div>

      <div class="doc-tabs">
        <div class="doc-tab"><svg class="icon"><use href="#logo"/></svg><a href="#">Start page</a><button aria-label="Close Start page"><svg><use href="#close"/></svg></button></div>
        <div class="doc-tab active"><svg class="icon"><use href="#logo"/></svg><a href="#">Ex12_18_12_2022 : 1*</a><button aria-label="Close Ex12_18_12_2022"><svg><use href="#close"/></svg></button></div>
        <div class="doc-tab"><svg class="icon"><use href="#sheet"/></svg><a href="#">Page*</a><button aria-label="Close Page"><svg><use href="#close"/></svg></button></div>
      </div>
    </section>
  </main>

  <footer class="statusbar">
    <span class="message">Preselected: Unnamed.Body.Pocket.Edge15 (26.900600 mm, -20.000000 mm, 0.000000 mm)</span>
    <button class="nav-style drop"><svg viewBox="0 0 8 10"><rect x="1.500" y="1" width="5" height="8" rx="2"/><path d="M4 1v3"/></svg>TinkerCAD</button>
    <span class="size">111.67 mm x 67.03 mm</span>
  </footer>
</body>
</html>
```

FILE: styles.css
```css
* {
  box-sizing: border-box;
}

body {
  margin: 0;
  min-height: 100vh;
  display: flex;
  flex-direction: column;
  background: #efefef;
  color: #111;
  font-family: Roboto, "Open Sans", sans-serif;
  font-size: 6px;
  line-height: 10px;
}

h1, h2, h3, p, ul {
  margin: 0;
  padding: 0;
  font-size: 6px;
  font-weight: normal;
}

ul {
  list-style: none;
}

a {
  color: inherit;
  text-decoration: none;
}

button, select {
  font: inherit;
  color: inherit;
  background: none;
  border: 0;
  padding: 0;
  margin: 0;
}

.sprite {
  position: absolute;
  width: 0;
  height: 0;
}

.icon {
  width: 9px;
  height: 9px;
  flex: none;
}

/* strokes and fills shared by the greyed icons */
.g {
  fill: none;
  stroke: #939393;
  stroke-width: 1.2;
}

.gf {
  fill: #acacac;
}

.gd {
  fill: #8c8c8c;
}

.gl {
  fill: none;
  stroke: #e4e4e4;
}

.d {
  fill: none;
  stroke: #a39c3d;
  stroke-width: 1.8;
}

/* title and menu */
.titlebar {
  display: flex;
  align-items: center;
  gap: 2px;
  height: 11px;
  padding: 0 8px 0 1px;
  background: #4b4a48;
  color: #fff;
}

.window-buttons {
  display: flex;
  gap: 15px;
  margin-left: auto;
}

.window-buttons button {
  width: 8px;
  height: 10px;
}

.window-buttons svg, .dock-title svg {
  display: block;
  width: 6px;
  height: 6px;
  fill: none;
  stroke: currentColor;
}

.menubar {
  display: flex;
  gap: 8px;
  height: 11px;
  padding: 0 4px;
  background: #fff;
}

/* toolbars */
.toolbar {
  display: grid;
  align-items: center;
  justify-content: start;
  height: 13px;
  border-bottom: 1px solid #d2d2d2;
}

.toolbar-file {
  grid-template-columns: 51px 37px 39px 50px 84px 50px;
}

.toolbar-view {
  grid-template-columns: 59px 43px 32px 37px 37px 17px 55px;
}

.toolbar-draw {
  grid-template-columns: 40px 40px 135px 39px 138px 128px 88px 105px 29px 63px 132px;
  height: 14px;
}

.group {
  display: flex;
  align-items: center;
  justify-content: space-between;
  height: 11px;
  padding: 0 1px 0 6px;
  background: radial-gradient(circle, #bcbcbc 30%, transparent 40%) 1px 0 / 2px 2px repeat-y;
}

.group.plain {
  padding: 0 1px 0 3px;
  background: none;
}

.toolbar button {
  display: flex;
  align-items: center;
  height: 11px;
}

.toolbar button svg {
  width: 9px;
  height: 9px;
}

.drop::after {
  content: "";
  margin-left: 2px;
  border: 2px solid transparent;
  border-top: 2px solid #333;
  border-bottom: 0;
}

.toolbar .on {
  background: #b9d9f2;
}

.workbench {
  position: relative;
  padding-right: 2px;
}

.workbench select {
  flex: 1;
  height: 10px;
  padding-left: 11px;
  border: 1px solid #b3b3b3;
  background: #e3e3e3;
  appearance: none;
}

.workbench .icon {
  position: absolute;
  left: 8px;
  width: 8px;
  height: 8px;
  pointer-events: none;
}

.workbench .chevron {
  left: auto;
  right: 4px;
  width: 7px;
}

/* main area */
main {
  flex: 1;
  display: flex;
  gap: 1px;
}

.dock {
  position: relative;
  display: flex;
  flex-direction: column;
  width: 237px;
  border-right: 1px solid #e0e0e0;
}

.dock-title {
  display: flex;
  align-items: center;
  justify-content: space-between;
  height: 10px;
  padding: 0 2px;
  background: #d6d6d6;
}

.tabs {
  display: flex;
  height: 12px;
  padding-left: 1px;
}

.tabs button {
  display: flex;
  align-items: center;
  gap: 1px;
  padding: 0 5px;
  border-right: 1px solid #dcdcdc;
}

.tabs .active {
  background: #fff;
}

.tabs-bottom {
  height: 11px;
  margin-bottom: 2px;
  background: #fff;
}

.tabs-bottom button:first-child {
  background: #efefef;
}

.tree {
  flex: 1;
  margin: 0 1px;
  border: 1px solid #a9a9a9;
  background: #fff;
}

.tree-head {
  display: flex;
}

.tree-head span {
  width: 50px;
  padding-left: 2px;
  border-right: 1px solid #e6e6e6;
}

.tree-head span:first-child {
  width: 101px;
  padding-left: 1px;
}

.tree > ul {
  padding-left: 1px;
}

.row {
  display: flex;
  align-items: center;
  gap: 2px;
  height: 10px;
  white-space: nowrap;
}

.row.root {
  padding-left: 1px;
}

.row svg {
  width: 9px;
  height: 9px;
  flex: none;
}

.row > svg:first-child {
  width: 8px;
  height: 7px;
}

.row.leaf {
  padding-left: 10px;
}

.row.leaf > svg:first-child {
  width: 9px;
  height: 9px;
}

.row.bold {
  font-weight: bold;
}

.row.dim {
  color: #8b8b8b;
}

.tree ul ul {
  padding-left: 10px;
}

.pick {
  display: flex;
  align-items: center;
  gap: 2px;
  width: 80px;
  height: 10px;
  outline: 1px solid #8288b8;
  outline-offset: -1px;
  background: #e3e5fb;
}

.props {
  height: 81px;
  margin: 3px 3px 0 1px;
  border: 1px solid #a9a9a9;
  background: #fff;
}

.props table {
  border-collapse: collapse;
  width: 100%;
}

.props th {
  padding: 0 2px;
  font-weight: normal;
  text-align: left;
}

.props th:first-child {
  width: 50px;
  border-right: 1px solid #ddd;
}

.ghost {
  position: absolute;
  left: 36px;
  bottom: 24px;
  width: 192px;
  height: 107px;
  border: 1px solid rgba(0, 0, 0, 0.02);
  color: rgba(0, 0, 0, 0.06);
  pointer-events: none;
}

.ghost-title {
  height: 14px;
  padding: 2px 34px;
  background: rgba(0, 0, 0, 0.05);
  color: rgba(255, 255, 255, 0.5);
}

.ghost-tools {
  display: flex;
  justify-content: space-between;
  padding: 5px 3px 5px 16px;
}

.ghost-text {
  padding: 4px 22px;
  line-height: 8px;
}

.ghost-text h3 {
  padding-left: 14px;
}

.ghost-text p {
  padding: 6px 0;
}

.ghost-button {
  display: inline-block;
  padding: 2px 4px;
  background: rgba(0, 0, 0, 0.04);
  color: #fff;
}

.workspace {
  flex: 1;
  display: flex;
  flex-direction: column;
  min-width: 0;
}

.canvas {
  position: relative;
  flex: 1;
  background: #fff;
  border-bottom: 1px solid #b9b9b9;
}

.model {
  display: block;
  width: 100%;
}

.edge {
  stroke: #0d1722;
  stroke-width: 1;
}

g.edge {
  fill: none;
}

.navcube {
  position: absolute;
  top: 0;
  right: 0;
  width: 70px;
  height: 70px;
}

.cube-text {
  font-size: 4px;
  font-weight: bold;
  text-anchor: middle;
  fill: #30373c;
}

.axes {
  position: absolute;
  right: 4px;
  bottom: 10px;
  width: 26px;
  height: 32px;
  font-size: 5px;
  font-weight: bold;
}

.doc-tabs {
  display: flex;
  gap: 3px;
  height: 12px;
  padding-left: 4px;
}

.doc-tab {
  display: flex;
  align-items: center;
  gap: 2px;
  padding: 0 3px;
  background: #e9e9e9;
}

.doc-tab.active {
  padding: 0 7px;
  background: #fff;
}

.doc-tab button {
  width: 7px;
  height: 7px;
  border: 1px solid #a3a3a3;
  color: #8c8c8c;
}

.doc-tab button svg {
  display: block;
  width: 5px;
  height: 5px;
}

.doc-tab.active button {
  border-color: #c9502f;
  background: #df6846;
  color: #fff;
}

.statusbar {
  display: flex;
  align-items: center;
  height: 15px;
  padding: 0 4px 0 1px;
}

.message {
  flex: 1;
}

.nav-style {
  display: flex;
  align-items: center;
  padding-right: 4px;
  border-right: 1px solid #dadada;
}

.nav-style svg {
  width: 8px;
  height: 9px;
  fill: none;
  stroke: #333;
}

.size {
  padding-left: 3px;
}
```
